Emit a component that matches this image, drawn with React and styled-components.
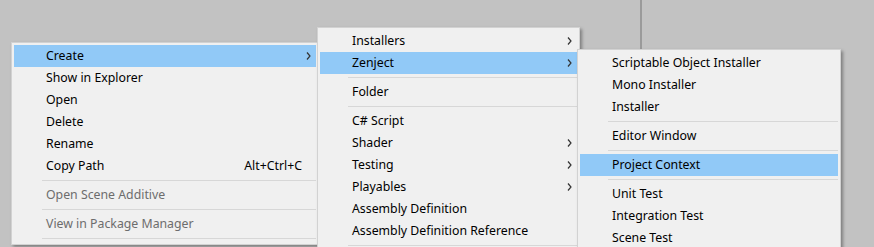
import React from 'react';
import styled, { createGlobalStyle } from 'styled-components';

const GlobalStyle = createGlobalStyle`
  html, body {
    margin: 0;
    padding: 0;
    overflow: hidden;
    background: #c2c2c2;
  }
`;

const Desktop = styled.div`
  position: relative;
  width: 874px;
  height: 247px;
  overflow: hidden;
  display: flex;
  background: #c2c2c2;
  font-family: "Noto Sans", "Open Sans", sans-serif;
  font-size: 12.3px;
`;

const Pane = styled.div`
  flex: ${props => props.$grow ? '1' : 'none'};
  width: ${props => props.$width || 'auto'};
  background: #c2c2c2;
`;

const Splitter = styled.div`
  width: 2px;
  background: #9a9a9a;
`;

// Popup context menu - each level is placed next to the item that opened it
const Menu = styled.div`
  position: absolute;
  left: ${props => props.$x}px;
  top: ${props => props.$y}px;
  width: ${props => props.$w}px;
  box-sizing: border-box;
  background: #f0f0f0;
  border: 1px solid #d2d2d2;
  padding: 2px 2px;
  box-shadow: 2px 2px 3px rgba(0, 0, 0, 0.35);
`;

const Row = styled.div`
  height: 22px;
  box-sizing: border-box;
  display: flex;
  align-items: center;
  padding: 0 5px 2px 32px;
  background: ${props => props.$active ? '#91c9f7' : 'transparent'};
  color: ${props => props.$disabled ? '#6d6d6d' : '#000'};
  white-space: nowrap;
`;

const Label = styled.span`
  flex: 1;
`;

const Shortcut = styled.span`
  margin-right: 9px;
`;

const Separator = styled.div`
  height: 7px;
  display: flex;
  align-items: center;
  padding-left: 28px;
  &::after {
    content: '';
    flex: 1;
    height: 1px;
    background: #d7d7d7;
  }
`;

const ChevronSvg = styled.svg`
  fill: none;
  stroke: #333;
  stroke-width: 1.2;
  margin-top: 2px;
`;

// submenu arrow
const Chevron = () => (
  <ChevronSvg width='5' height='8' viewBox='0 0 5 8'>
    <polyline points='1 0.5, 4 4, 1 7.5' />
  </ChevronSvg>
);

const Item = ({ label, shortcut, sub, active, disabled }) => (
  <Row $active={active} $disabled={disabled}>
    <Label>{label}</Label>
    {shortcut && <Shortcut>{shortcut}</Shortcut>}
    {sub && <Chevron />}
  </Row>
);

const SEP = '-';

const mainItems = [
  { label: 'Create', sub: true, active: true },
  { label: 'Show in Explorer' },
  { label: 'Open' },
  { label: 'Delete' },
  { label: 'Rename' },
  { label: 'Copy Path', shortcut: 'Alt+Ctrl+C' },
  SEP,
  { label: 'Open Scene Additive', disabled: true },
  SEP,
  { label: 'View in Package Manager', disabled: true },
  SEP
];

const createItems = [
  { label: 'Installers', sub: true },
  { label: 'Zenject', sub: true, active: true },
  SEP,
  { label: 'Folder' },
  SEP,
  { label: 'C# Script' },
  { label: 'Shader', sub: true },
  { label: 'Testing', sub: true },
  { label: 'Playables', sub: true },
  { label: 'Assembly Definition' },
  { label: 'Assembly Definition Reference' },
  SEP
];

const zenjectItems = [
  { label: 'Scriptable Object Installer' },
  { label: 'Mono Installer' },
  { label: 'Installer' },
  SEP,
  { label: 'Editor Window' },
  SEP,
  { label: 'Project Context', active: true },
  SEP,
  { label: 'Unit Test' },
  { label: 'Integration Test' },
  { label: 'Scene Test' }
];

const renderItems = items => items.map((item, i) =>
  item === SEP ? <Separator key={i} /> : <Item key={i} {...item} />
);

export default function App() {
  return (
    <>
      <GlobalStyle />
      <Desktop>
        <Pane $width='640px' />
        <Splitter />
        <Pane $grow />
        <Menu $x={11} $y={42} $w={308}>{renderItems(mainItems)}</Menu>
        <Menu $x={317} $y={27} $w={263}>{renderItems(createItems)}</Menu>
        <Menu $x={577} $y={49} $w={264}>{renderItems(zenjectItems)}</Menu>
      </Desktop>
    </>
  );
}
